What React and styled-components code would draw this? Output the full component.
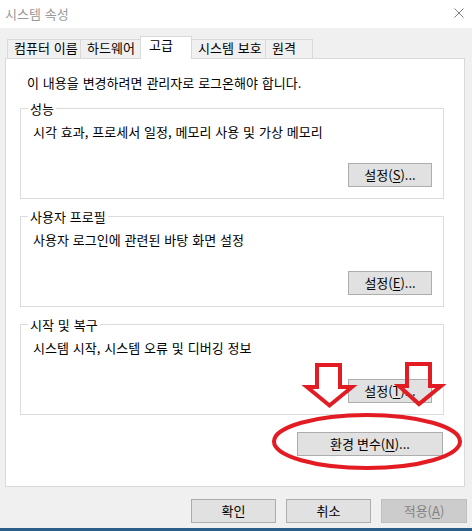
import React from "react";
import styled, { createGlobalStyle } from "styled-components";

const GlobalStyle = createGlobalStyle`
  html, body {
    margin: 0;
    padding: 0;
    background: #f0f0f0;
  }
  * {
    box-sizing: border-box;
  }
`;

const Window = styled.div`
  position: relative;
  width: 472px;
  height: 531px;
  display: flex;
  flex-direction: column;
  background: #f0f0f0;
  font-family: "Noto Sans CJK KR", "Noto Sans", sans-serif;
  font-size: 13px;
  word-spacing: 1px;
  color: #000;
  overflow: hidden;
`;

const TitleBar = styled.div`
  height: 28px;
  flex-shrink: 0;
  background: #fff;
  display: flex;
  align-items: center;
  justify-content: space-between;
  padding: 0 8px 2px 5px;
  color: #999;
`;

const TabStrip = styled.div`
  display: flex;
  align-items: flex-end;
  height: 22px;
  margin-top: 8px;
  padding-left: 7px;
`;

const Tab = styled.div`
  position: relative;
  width: ${(p) => p.$w}px;
  height: ${(p) => (p.$active ? 23 : 19)}px;
  margin-bottom: ${(p) => (p.$active ? -1 : 0)}px;
  margin-left: -1px;
  z-index: ${(p) => (p.$active ? 2 : 1)};
  padding: 0 0 0 ${(p) => (p.$active ? 8 : 6)}px;
  line-height: 15px;
  border: 1px solid #d9d9d9;
  border-bottom: none;
  background: ${(p) => (p.$active ? "#fff" : "#f0f0f0")};
  white-space: nowrap;
  &:first-child {
    margin-left: 0;
  }
`;

const Panel = styled.div`
  width: 460px;
  height: 429px;
  margin-left: 5px;
  border: 1px solid #d9d9d9;
  background: #fff;
  padding: 16px 20px 0 14px;
  display: flex;
  flex-direction: column;
  gap: 17px;
`;

const Note = styled.div`
  line-height: 16px;
  padding-left: 7px;
`;

const Group = styled.div`
  position: relative;
  height: 91px;
  border: 1px solid #dcdcdc;
  padding: 15px 11px 11px 12px;
  display: flex;
  flex-direction: column;
`;

const GroupTitle = styled.span`
  position: absolute;
  top: -8px;
  left: 7px;
  padding: 0 2px;
  line-height: 16px;
  background: #fff;
`;

const GroupText = styled.div`
  line-height: 16px;
`;

const Button = styled.button`
  width: ${(p) => p.$w || 84}px;
  height: 24px;
  padding: 0;
  font: inherit;
  line-height: 16px;
  color: ${(p) => (p.disabled ? "#838383" : "#000")};
  background: ${(p) => (p.disabled ? "#cccccc" : "#e1e1e1")};
  border: 1px solid ${(p) => (p.disabled ? "#bfbfbf" : "#adadad")};
  border-radius: 0;
`;

const GroupButton = styled(Button)`
  margin-top: auto;
  align-self: flex-end;
`;

const EnvButton = styled(Button)`
  align-self: flex-end;
  margin-right: 1px;
`;

const Key = styled.span`
  text-decoration: underline;
  text-underline-offset: 2px;
`;

const Footer = styled.div`
  display: flex;
  justify-content: flex-end;
  gap: 10px;
  margin-top: 12px;
  padding-right: 5px;
`;

const Taskbar = styled.div`
  margin-top: auto;
  height: 3px;
  background: #2b5f8a;
`;

const Marks = styled.svg`
  position: absolute;
  left: 0;
  top: 0;
  pointer-events: none;
`;

const CloseIcon = () => (
  <svg width="10" height="10" viewBox="0 0 10 10">
    <path d="M0.5 0.5 L9.5 9.5 M9.5 0.5 L0.5 9.5" stroke="#808080" strokeWidth="1" />
  </svg>
);

const tabs = [
  { label: "컴퓨터 이름", w: 74 },
  { label: "하드웨어", w: 61 },
  { label: "고급", w: 52, active: true },
  { label: "시스템 보호", w: 75 },
  { label: "원격", w: 48 },
];

const groups = [
  { title: "성능", text: "시각 효과, 프로세서 일정, 메모리 사용 및 가상 메모리", key: "S" },
  { title: "사용자 프로필", text: "사용자 로그인에 관련된 바탕 화면 설정", key: "E" },
  { title: "시작 및 복구", text: "시스템 시작, 시스템 오류 및 디버깅 정보", key: "T" },
];

export default function App() {
  return (
    <>
      <GlobalStyle />
      <Window>
        <TitleBar>
          <span>시스템 속성</span>
          <CloseIcon />
        </TitleBar>
        <TabStrip>
          {tabs.map((t) => (
            <Tab key={t.label} $w={t.w} $active={t.active}>
              {t.label}
            </Tab>
          ))}
        </TabStrip>
        <Panel>
          <Note>이 내용을 변경하려면 관리자로 로그온해야 합니다.</Note>
          {groups.map((g) => (
            <Group key={g.title}>
              <GroupTitle>{g.title}</GroupTitle>
              <GroupText>{g.text}</GroupText>
              <GroupButton>
                설정(<Key>{g.key}</Key>)...
              </GroupButton>
            </Group>
          ))}
          <EnvButton $w={146}>
            환경 변수(<Key>N</Key>)...
          </EnvButton>
        </Panel>
        <Footer>
          <Button $w={85}>확인</Button>
          <Button $w={85}>취소</Button>
          <Button $w={86} disabled>
            적용(<Key>A</Key>)
          </Button>
        </Footer>
        <Taskbar />
        <Marks width="472" height="531" viewBox="0 0 472 531">
          <g fill="none" stroke="#e31b23" strokeWidth="4" strokeLinejoin="miter">
            <path d="M317 365 H340 V387 H352 L329.5 405.5 L307 387 H317 Z" />
            <path d="M407 364 H430 V386 H441 L419 404 L399 386 H407 Z" />
            <ellipse cx="367" cy="441.5" rx="93" ry="26.5" />
          </g>
        </Marks>
      </Window>
    </>
  );
}
